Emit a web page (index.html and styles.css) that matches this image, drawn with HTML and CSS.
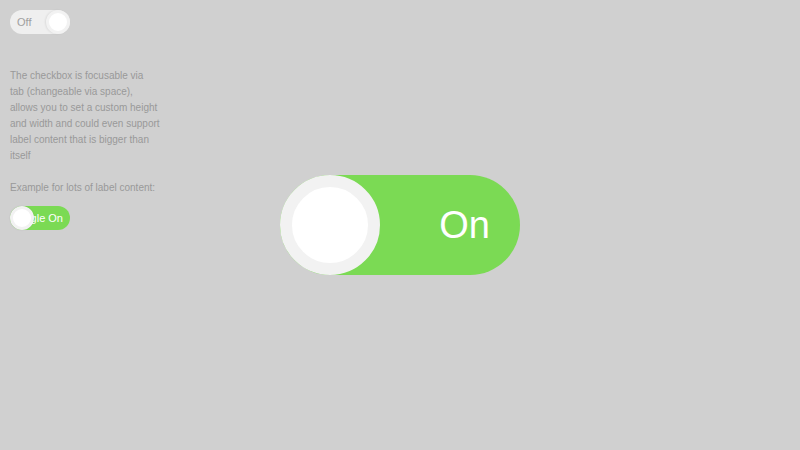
FILE: index.html
```html
<!DOCTYPE html>
<html>
<head>
<meta charset="utf-8">
<link rel="stylesheet" href="styles.css">
</head>
<body>
<div class="page">
  <div class="side">
    <label class="toggle toggle-off">
      <span class="toggle-text">Off</span>
      <span class="knob"></span>
    </label>
    <p class="desc">The checkbox is focusable via tab (changeable via space), allows you to set a custom height and width and could even support label content that is bigger than itself</p>
    <p class="example">Example for lots of label content:</p>
    <label class="toggle toggle-on">
      <span class="toggle-text">Toggle On</span>
      <span class="knob"></span>
    </label>
  </div>
  <div class="stage">
    <label class="toggle toggle-big">
      <span class="toggle-text">On</span>
      <span class="knob"></span>
    </label>
  </div>
</div>
</body>
</html>
```

FILE: styles.css
```css
html, body {
  margin: 0;
  padding: 0;
}
body {
  background: #d0d0d0;
  font-family: "Liberation Sans", Arial, sans-serif;
}
.page {
  display: grid;
  width: 100vw;
  height: 100vh;
}
.side, .stage {
  grid-area: 1 / 1;
}
.side {
  align-self: start;
  justify-self: start;
  padding: 10px;
  width: 150px;
}
.stage {
  place-self: center;
}
.toggle {
  display: grid;
  width: 60px;
  height: 24px;
  border-radius: 12px;
  align-items: center;
  overflow: visible;
}
.toggle > * {
  grid-area: 1 / 1;
}
.toggle-text {
  font-size: 11px;
  line-height: 24px;
  white-space: nowrap;
}
.knob {
  box-sizing: border-box;
  width: 24px;
  height: 24px;
  border-radius: 50%;
  background: #ffffff;
  border: 3px solid #f2f2f2;
}
.toggle-off {
  background: #efefef;
}
.toggle-off .toggle-text {
  justify-self: start;
  padding-left: 7px;
  color: #a0a0a0;
}
.toggle-off .knob {
  justify-self: end;
  box-shadow: -1px 0 2px rgba(0, 0, 0, 0.08);
}
.toggle-on {
  background: #7bda54;
}
.toggle-on .toggle-text,
.toggle-big .toggle-text {
  justify-self: end;
  color: #ffffff;
}
.toggle-on .toggle-text {
  padding-right: 7px;
}
.toggle-on .knob,
.toggle-big .knob {
  justify-self: start;
}
.toggle-on .knob {
  box-shadow: 0 0 2px rgba(0, 0, 0, 0.08);
}
.toggle-big {
  width: 240px;
  height: 100px;
  border-radius: 50px;
  background: #7bda54;
}
.toggle-big .toggle-text {
  font-size: 38px;
  line-height: 100px;
  padding-right: 30px;
}
.toggle-big .knob {
  width: 100px;
  height: 100px;
  border-width: 12px;
}
.desc, .example {
  font-size: 10px;
  line-height: 16px;
  color: #999999;
}
.desc {
  margin: 34px 0 0 0;
}
.example {
  margin: 16px 0 10px 0;
}
```
